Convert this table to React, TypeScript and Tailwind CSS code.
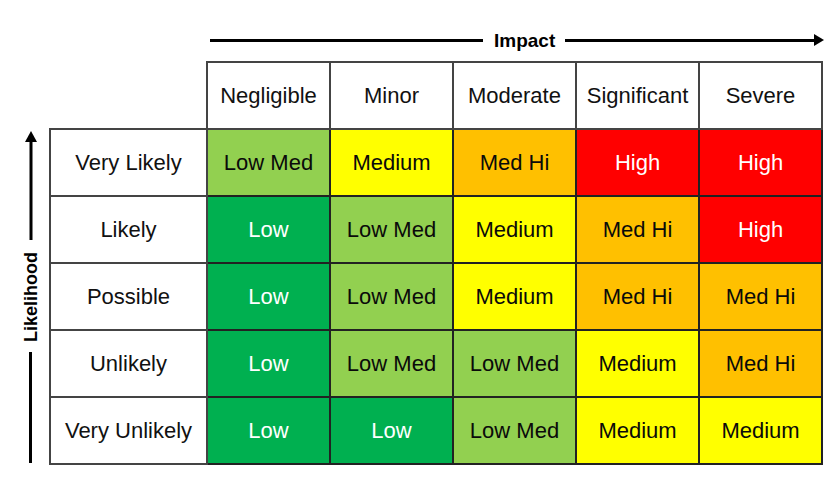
const impacts = ["Negligible", "Minor", "Moderate", "Significant", "Severe"];

type Level = "Low" | "Low Med" | "Medium" | "Med Hi" | "High";

const rows: { label: string; cells: Level[] }[] = [
  { label: "Very Likely", cells: ["Low Med", "Medium", "Med Hi", "High", "High"] },
  { label: "Likely", cells: ["Low", "Low Med", "Medium", "Med Hi", "High"] },
  { label: "Possible", cells: ["Low", "Low Med", "Medium", "Med Hi", "Med Hi"] },
  { label: "Unlikely", cells: ["Low", "Low Med", "Low Med", "Medium", "Med Hi"] },
  { label: "Very Unlikely", cells: ["Low", "Low", "Low Med", "Medium", "Medium"] },
];

const levelClass: Record<Level, string> = {
  Low: "bg-[#00b050] text-white",
  "Low Med": "bg-[#92d050] text-[#0a0a0a]",
  Medium: "bg-[#ffff00] text-[#0a0a0a]",
  "Med Hi": "bg-[#ffc000] text-[#0a0a0a]",
  High: "bg-[#ff0000] text-white",
};

export default function App() {
  return (
    <div className="w-[835px] h-[481px] bg-white flex flex-col pt-[28px] font-['Liberation_Sans',Arial,sans-serif]">
      {/* Impact axis */}
      <div className="flex items-center ml-[210px] w-[614px] h-6">
        <div className="w-[273px] h-[3px] bg-black" />
        <span className="ml-[11px] mr-[10px] text-[19px] font-bold leading-none text-black">Impact</span>
        <div className="flex-1 h-[3px] bg-black" />
        <svg width="10" height="12" viewBox="0 0 10 12" className="-ml-px">
          <polygon points="0,0 10,6 0,12" fill="black" />
        </svg>
      </div>

      <div className="flex mt-[9px]">
        {/* Likelihood axis */}
        <div className="w-[49px] pl-[12px] pt-[67px] h-[402px] flex flex-col items-center">
          <svg width="12" height="112" viewBox="0 0 12 112">
            <polygon points="6,3 0,14 12,14" fill="black" />
            <rect x="4.5" y="12" width="3" height="100" fill="black" />
          </svg>
          <span className="mt-[12px] mb-[10px] [writing-mode:vertical-rl] rotate-180 text-[18px] font-bold leading-none text-black">
            Likelihood
          </span>
          <div className="flex-1 w-[3px] bg-black" />
        </div>

        <table className="border-collapse text-[22px] text-[#111]">
          <thead>
            <tr className="h-[67px]">
              <th className="w-[157px] p-0" />
              {impacts.map((i) => (
                <th key={i} className="w-[123px] p-0 font-normal border-2 border-[#444] bg-white">
                  {i}
                </th>
              ))}
            </tr>
          </thead>
          <tbody>
            {rows.map((r) => (
              <tr key={r.label} className="h-[67px]">
                <td className="p-0 text-center border-2 border-[#444] bg-white">{r.label}</td>
                {r.cells.map((c, idx) => (
                  <td key={idx} className={`p-0 text-center border-2 border-[#222] ${levelClass[c]}`}>
                    {c}
                  </td>
                ))}
              </tr>
            ))}
          </tbody>
        </table>
      </div>
    </div>
  );
}
